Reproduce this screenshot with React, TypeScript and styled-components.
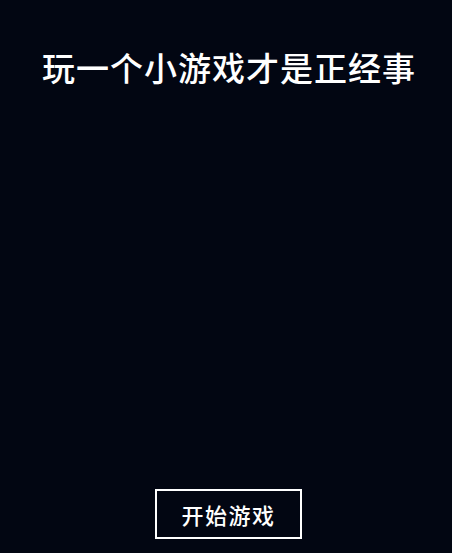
import React from "react";
import styled, { createGlobalStyle } from "styled-components";

const GlobalStyle = createGlobalStyle`
  html, body {
    margin: 0;
    padding: 0;
    background: #020612;
  }
  * { box-sizing: border-box; }
`;

const Screen = styled.div`
  width: 100vw;
  height: 100vh;
  background: #020612;
  display: flex;
  flex-direction: column;
  align-items: center;
  justify-content: space-between;
  padding: 46px 0 14px;
  font-family: "Noto Sans CJK SC", "Noto Sans", sans-serif;
  color: #ffffff;
`;

const Title = styled.h1`
  margin: 0 0 0 6px;
  font-size: 33px;
  line-height: 42px;
  font-weight: 500;
  letter-spacing: 1px;
  text-align: center;
`;

const StartButton = styled.button`
  width: 147px;
  height: 50px;
  margin-left: 5px;
  border: 2px solid #ffffff;
  background: transparent;
  color: #ffffff;
  font-family: inherit;
  font-size: 22px;
  font-weight: 500;
  letter-spacing: 1.5px;
  display: flex;
  align-items: center;
  justify-content: center;
  padding: 0;
  cursor: pointer;
`;

export default function App() {
  return (
    <>
      <GlobalStyle />
      <Screen>
        <Title>玩一个小游戏才是正经事</Title>
        <StartButton>开始游戏</StartButton>
      </Screen>
    </>
  );
}
